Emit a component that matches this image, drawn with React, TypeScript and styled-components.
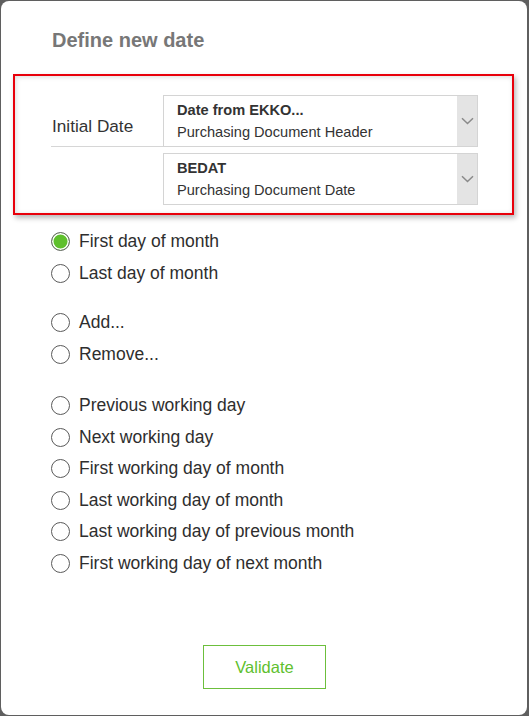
import React, { useState } from "react";
import styled, { createGlobalStyle } from "styled-components";

const Global = createGlobalStyle`
  html, body { margin: 0; padding: 0; background: #5f5f5f; }
  body { font-family: "Liberation Sans", Arial, sans-serif; }
  * { box-sizing: border-box; }
`;

const Dialog = styled.div`
  margin: 1px 2px 1px 1px;
  width: 526px;
  height: 714px;
  background: #ffffff;
  border-radius: 8px;
  display: flex;
  flex-direction: column;
  padding: 27px 0 26px 0;
`;

const Title = styled.h1`
  margin: 0 0 22px 51px;
  font-size: 20px;
  line-height: 24px;
  font-weight: bold;
  color: #777777;
`;

const Highlight = styled.div`
  margin: 0 13px 0 12px;
  border: 2px solid #e8000b;
  padding: 19px 35px 8px 36px;
  box-shadow: 2px 3px 5px rgba(0, 0, 0, 0.28), inset 1px 1px 5px rgba(0, 0, 0, 0.14);
  display: grid;
  grid-template-columns: 112px 315px;
  row-gap: 6px;
`;

const FieldLabel = styled.div<{ $lined?: boolean }>`
  height: 52px;
  padding: 12px 0 0 1px;
  display: flex;
  align-items: center;
  font-size: 17.2px;
  color: #333333;
  border-bottom: ${(p) => (p.$lined ? "1px solid #d6d6d6" : "none")};
`;

const Select = styled.div`
  height: 52px;
  border: 1px solid #d4d4d4;
  display: flex;
  background: #ffffff;
`;

const SelectText = styled.div`
  flex: 1;
  display: flex;
  flex-direction: column;
  justify-content: center;
  padding-left: 13px;
  font-size: 14.6px;
  line-height: 22px;
  color: #333333;
`;

const Strong = styled.span`
  font-weight: bold;
`;

const Arrow = styled.div`
  width: 20px;
  background: #e4e4e4;
  display: flex;
  align-items: center;
  justify-content: center;
`;

const Options = styled.div`
  margin: 11px 0 0 50px;
  display: flex;
  flex-direction: column;
`;

const Group = styled.div<{ $gap: number }>`
  display: flex;
  flex-direction: column;
  margin-top: ${(p) => p.$gap}px;
`;

const Option = styled.label`
  height: 31.5px;
  display: flex;
  align-items: center;
  gap: 9px;
  font-size: 17.5px;
  color: #2e2e2e;
  cursor: pointer;
`;

const Radio = styled.input`
  appearance: none;
  margin: 0;
  width: 19px;
  height: 19px;
  border-radius: 50%;
  border: 1px solid #5a5a5a;
  background: #ffffff;
  flex: none;
  &:checked {
    background: #5ec02c;
    box-shadow: inset 0 0 0 1.5px #ffffff;
    border-color: #6a6a6a;
  }
`;

const Footer = styled.div`
  margin-top: auto;
  display: flex;
  justify-content: center;
  padding-left: 1px;
`;

const ValidateButton = styled.button`
  width: 123px;
  height: 44px;
  background: #ffffff;
  border: 1px solid #6cbf3c;
  color: #5ebf2e;
  font-family: "Liberation Sans", Arial, sans-serif;
  font-size: 16.5px;
  cursor: pointer;
`;

const Chevron = () => (
  <svg width="13" height="8" viewBox="0 0 13 8">
    <path d="M1 1.2 L6.5 6.5 L12 1.2" fill="none" stroke="#8a8a8a" strokeWidth="1.5" />
  </svg>
);

const groups: { gap: number; items: string[] }[] = [
  { gap: 0, items: ["First day of month", "Last day of month"] },
  { gap: 18, items: ["Add...", "Remove..."] },
  {
    gap: 20,
    items: [
      "Previous working day",
      "Next working day",
      "First working day of month",
      "Last working day of month",
      "Last working day of previous month",
      "First working day of next month",
    ],
  },
];

export default function App() {
  const [choice, setChoice] = useState("First day of month");
  return (
    <>
      <Global />
      <Dialog>
        <Title>Define new date</Title>
        <Highlight>
          <FieldLabel $lined>Initial Date</FieldLabel>
          <Select>
            <SelectText>
              <Strong>Date from EKKO...</Strong>
              <span>Purchasing Document Header</span>
            </SelectText>
            <Arrow>
              <Chevron />
            </Arrow>
          </Select>
          <FieldLabel />
          <Select>
            <SelectText>
              <Strong>BEDAT</Strong>
              <span>Purchasing Document Date</span>
            </SelectText>
            <Arrow>
              <Chevron />
            </Arrow>
          </Select>
        </Highlight>
        <Options>
          {groups.map((g, i) => (
            <Group key={i} $gap={g.gap}>
              {g.items.map((o) => (
                <Option key={o}>
                  <Radio
                    type="radio"
                    name="rule"
                    checked={choice === o}
                    onChange={() => setChoice(o)}
                  />
                  {o}
                </Option>
              ))}
            </Group>
          ))}
        </Options>
        <Footer>
          <ValidateButton>Validate</ValidateButton>
        </Footer>
      </Dialog>
    </>
  );
}
